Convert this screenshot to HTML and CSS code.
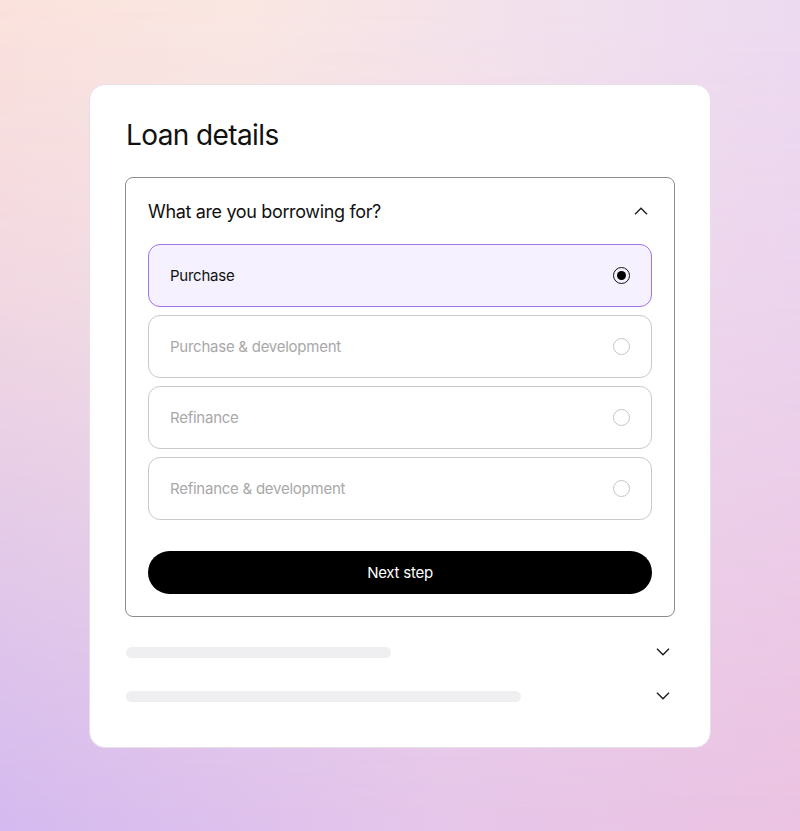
FILE: index.html
```html
<!DOCTYPE html>
<html lang="en">
<head>
    <meta charset="UTF-8">
    <meta name="viewport" content="width=device-width, initial-scale=1.0">
    <title>Loan details</title>
    <link rel="stylesheet" href="styles.css">
</head>
<body>
    <div class="page">
        <div class="card">
            <h1>Loan details</h1>

            <!-- Open step -->
            <div class="step">
                <div class="step-head">
                    <span>What are you borrowing for?</span>
                    <svg class="chevron" width="14" height="8" viewBox="0 0 14 8"><path d="M1 7.2 7 1.2l6 6" fill="none" stroke="#1c1c1c" stroke-width="1.4"/></svg>
                </div>
                <div class="options">
                    <label class="option selected"><span>Purchase</span><i class="radio"></i></label>
                    <label class="option"><span>Purchase &amp; development</span><i class="radio"></i></label>
                    <label class="option"><span>Refinance</span><i class="radio"></i></label>
                    <label class="option"><span>Refinance &amp; development</span><i class="radio"></i></label>
                </div>
                <button class="next">Next step</button>
            </div>

            <!-- Closed steps -->
            <div class="step-row">
                <div class="bar bar-short"></div>
                <svg class="chevron" width="14" height="8" viewBox="0 0 14 8"><path d="M1 .8l6 6 6-6" fill="none" stroke="#1c1c1c" stroke-width="1.4"/></svg>
            </div>
            <div class="step-row">
                <div class="bar bar-long"></div>
                <svg class="chevron" width="14" height="8" viewBox="0 0 14 8"><path d="M1 .8l6 6 6-6" fill="none" stroke="#1c1c1c" stroke-width="1.4"/></svg>
            </div>
        </div>
    </div>
</body>
</html>
```

FILE: styles.css
```css
* {
    box-sizing: border-box;
}
body {
    margin: 0;
    font-family: Inter, "Noto Sans", sans-serif;
    color: #111;
    background: linear-gradient(to right, #d4baf0, #e6c6ea 55%, #ecc3e2);
    min-height: 831px;
}
/* warm top half fades into the purple bottom */
body::before {
    content: "";
    position: fixed;
    inset: 0;
    background: linear-gradient(to right, #fbe2dc, #fae7e2 30%, #f2e1ec 65%, #ecdaf1);
    -webkit-mask-image: linear-gradient(to bottom, #000 0%, rgba(0,0,0,.75) 35%, transparent 100%);
    mask-image: linear-gradient(to bottom, #000 0%, rgba(0,0,0,.75) 35%, transparent 100%);
}
.page {
    position: relative;
    display: flex;
    justify-content: center;
    padding-top: 84px;
}
.card {
    width: 622px;
    height: 664px;
    background: #fff;
    border: 1px solid #e6dfe8;
    border-radius: 16px;
    padding: 32px 35px 29px;
}
h1 {
    margin: 0 0 24px 1px;
    font-size: 28px;
    line-height: 36px;
    font-weight: 400;
    letter-spacing: -0.6px;
}
.step {
    border: 1px solid #8c8c8c;
    border-radius: 8px;
    padding: 0 22px 22px;
}
.step-head {
    height: 66px;
    display: flex;
    align-items: center;
    justify-content: space-between;
    padding-right: 4px;
    font-size: 18px;
    letter-spacing: -0.35px;
}
.options {
    display: flex;
    flex-direction: column;
    gap: 8px;
}
.option {
    height: 63px;
    display: flex;
    align-items: center;
    justify-content: space-between;
    padding: 0 21px;
    border: 1px solid #c9c9c9;
    border-radius: 12px;
    font-size: 15px;
    letter-spacing: -0.25px;
    color: #a8a8a8;
}
.option.selected {
    background: #f5f1fe;
    border-color: #a274f2;
    color: #111;
}
.radio {
    width: 17px;
    height: 17px;
    border: 1.5px solid #c6c6c6;
    border-radius: 50%;
    display: flex;
    align-items: center;
    justify-content: center;
}
.option.selected .radio {
    border-color: #111;
}
.option.selected .radio::after {
    content: "";
    width: 9px;
    height: 9px;
    border-radius: 50%;
    background: #000;
}
.next {
    display: block;
    width: 100%;
    height: 43px;
    margin-top: 31px;
    border: none;
    border-radius: 999px;
    background: #000;
    color: #fff;
    font-family: inherit;
    font-size: 15px;
    letter-spacing: -0.25px;
}
.step-row {
    height: 44px;
    display: flex;
    align-items: center;
    justify-content: space-between;
    padding: 0 5px 0 1px;
}
.step + .step-row {
    margin-top: 13px;
}
.bar {
    height: 11px;
    border-radius: 6px;
    background: #efeff1;
}
.bar-short {
    width: 265px;
}
.bar-long {
    width: 395px;
}
```
